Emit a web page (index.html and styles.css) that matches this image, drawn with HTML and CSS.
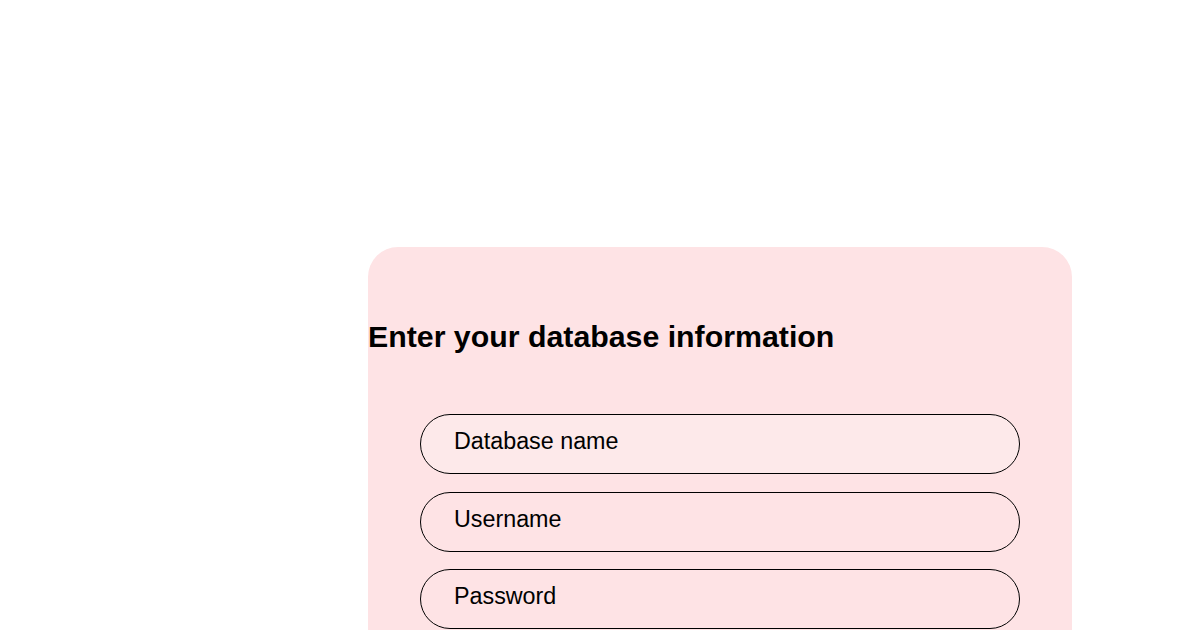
FILE: index.html
```html
<!DOCTYPE html>
<html lang="en">
<head>
<meta charset="utf-8">
<title>Database setup</title>
<link rel="stylesheet" href="styles.css">
</head>
<body>
  <main class="page">
    <section class="card">
      <h1 class="card-title">Enter your database information</h1>
      <form class="db-form">
        <input class="field field-active" type="text" placeholder="Database name">
        <input class="field" type="text" placeholder="Username">
        <input class="field" type="password" placeholder="Password">
      </form>
    </section>
  </main>
</body>
</html>
```
FILE: styles.css
```css
html, body {
  margin: 0;
  padding: 0;
  background: #ffffff;
  font-family: "Liberation Sans", Arial, sans-serif;
  color: #000;
}

.page {
  padding: 247px 0 0 368px;
}

.card {
  width: 704px;
  min-height: 500px;
  background: #fee3e5;
  border-radius: 30px;
  padding-top: 73px;
  box-sizing: border-box;
}

.card-title {
  margin: 0;
  font-size: 30.3px;
  font-weight: 700;
  line-height: 34.5px;
}

.db-form {
  display: flex;
  flex-direction: column;
  gap: 17.5px;
  padding: 59.5px 52px 0;
}

.field {
  box-sizing: border-box;
  width: 600px;
  height: 60px;
  margin: 0;
  padding: 0 33px 5px;
  border: 1px solid #000;
  border-radius: 30px;
  background: transparent;
  font-family: "Liberation Sans", Arial, sans-serif;
  font-size: 23.3px;
  color: #000;
  outline: none;
}

.field-active {
  background: #fde9ea;
}

.field::placeholder {
  color: #000;
  opacity: 1;
}
```
